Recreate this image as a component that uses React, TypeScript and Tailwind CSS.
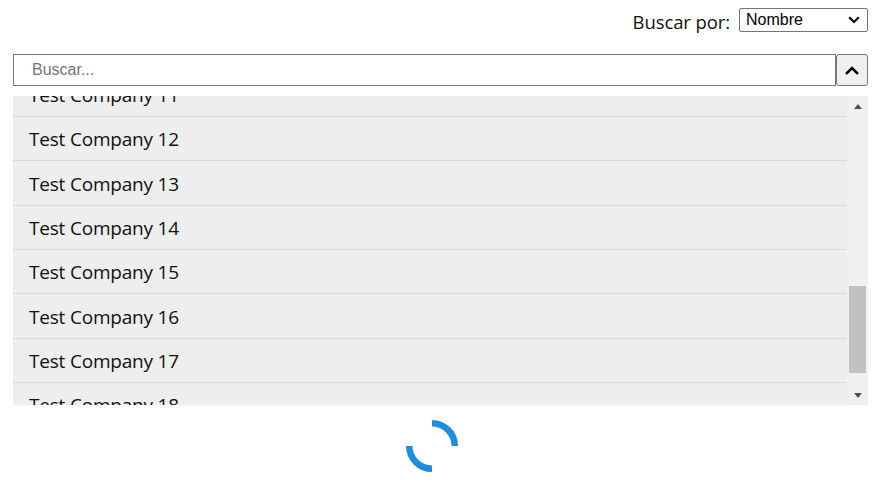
import React from "react";

const companies = Array.from({ length: 8 }, (_, i) => `Test Company ${i + 11}`);

function ChevronUp() {
  return (
    <svg width="14" height="10" viewBox="0 0 14 10" fill="none">
      <polyline points="2,8 7,3 12,8" stroke="#000" strokeWidth="2.6" strokeLinecap="square" />
    </svg>
  );
}

function ChevronDown() {
  return (
    <svg width="12" height="8" viewBox="0 0 12 8" fill="none">
      <polyline points="2,2 6,6 10,2" stroke="#000" strokeWidth="2.2" strokeLinecap="square" />
    </svg>
  );
}

function Spinner() {
  return (
    <svg width="56" height="56" viewBox="0 0 56 56" fill="none">
      <path d="M28 5.25 A22.75 22.75 0 0 1 50.75 28" stroke="#1c8ee0" strokeWidth="6.5" />
      <path d="M28 50.75 A22.75 22.75 0 0 1 5.25 28" stroke="#1c8ee0" strokeWidth="6.5" />
    </svg>
  );
}

export default function App() {
  return (
    <div className="h-[482px] w-[880px] bg-white pl-[13px] pr-[12px] font-['Open_Sans',sans-serif] text-black">
      <div className="flex h-[40px] items-center justify-end gap-[9px] pb-[1px]">
        <span className="pt-[5px] text-[18.5px] leading-none tracking-[-0.1px] text-[#111]">Buscar por:</span>
        <div className="flex h-[24px] w-[129px] items-center justify-between rounded-[2px] border border-[#767676] pl-[6px] pr-[7px] font-['Liberation_Sans',Arial,sans-serif] text-[16px]">
          <span>Nombre</span>
          <ChevronDown />
        </div>
      </div>

      <div className="mt-[14px] flex h-[32px]">
        <div className="flex flex-1 items-center border border-[#767676] pl-[18px] font-['Liberation_Sans',Arial,sans-serif] text-[16px] text-[#757575]">
          Buscar...
        </div>
        <div className="flex w-[32px] items-center justify-center rounded-[3px] border border-[#767676] bg-[#efefef]">
          <ChevronUp />
        </div>
      </div>

      <div className="mt-[10px] flex h-[309px]">
        <div className="flex-1 overflow-hidden bg-[#eeeeee]">
          <div className="-mt-[23.33px]">
            {companies.map((c) => (
              <div
                key={c}
                className="flex h-[44.33px] items-center border-b border-[#d9d9d9] pl-[16px] pt-[2px] text-[19px] tracking-[-0.2px] text-[#111]"
              >
                {c}
              </div>
            ))}
          </div>
        </div>
        <div className="flex w-[21px] flex-col bg-[#f0f0f0]">
          <div className="flex h-[20px] items-center justify-center">
            <div className="h-0 w-0 border-x-[4.5px] border-b-[5px] border-x-transparent border-b-[#505050]" />
          </div>
          <div className="flex flex-1 flex-col">
            <div className="ml-[2px] mt-[170px] h-[87px] w-[17px] bg-[#c1c1c1]" />
          </div>
          <div className="flex h-[20px] items-center justify-center">
            <div className="h-0 w-0 border-x-[4.5px] border-t-[5px] border-x-transparent border-t-[#505050]" />
          </div>
        </div>
      </div>

      <div className="flex w-[838px] justify-center pt-[13px]">
        <Spinner />
      </div>
    </div>
  );
}
